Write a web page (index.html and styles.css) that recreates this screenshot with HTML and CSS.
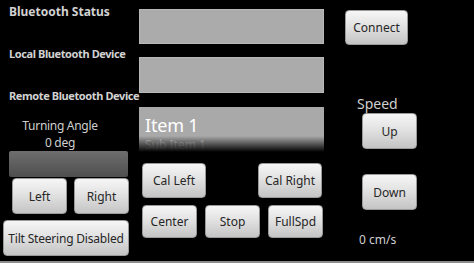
FILE: index.html
```html
<!DOCTYPE html>
<html>
<head>
<meta charset="utf-8">
<link rel="stylesheet" href="styles.css">
</head>
<body>
<div class="screen">
  <div class="main">
    <div class="col col-left">
      <div class="label label-title">Bluetooth Status</div>
      <div class="label label-local">Local Bluetooth Device</div>
      <div class="label label-remote">Remote Bluetooth Device</div>
      <div class="angle">
        <div>Turning Angle</div>
        <div>0 deg</div>
      </div>
      <div class="bar"></div>
      <div class="row row-lr">
        <button class="btn btn-lr">Left</button>
        <button class="btn btn-lr">Right</button>
      </div>
      <button class="btn btn-tilt">Tilt Steering Disabled</button>
    </div>
    <div class="col col-mid">
      <div class="field field-1"></div>
      <div class="field field-2"></div>
      <div class="list">
        <div class="item-title">Item 1</div>
        <div class="item-sub">Sub Item 1</div>
      </div>
      <div class="row row-cal">
        <button class="btn btn-cal">Cal Left</button>
        <button class="btn btn-cal">Cal Right</button>
      </div>
      <div class="row row-ctl">
        <button class="btn btn-ctl">Center</button>
        <button class="btn btn-ctl">Stop</button>
        <button class="btn btn-ctl">FullSpd</button>
      </div>
    </div>
    <div class="col col-right">
      <button class="btn btn-connect">Connect</button>
      <div class="speed-label">Speed</div>
      <button class="btn btn-speed btn-up">Up</button>
      <button class="btn btn-speed btn-down">Down</button>
      <div class="speed-value">0 cm/s</div>
    </div>
  </div>
  <div class="bottom-line"></div>
</div>
</body>
</html>
```
FILE: styles.css
```css
html, body {
  margin: 0;
  padding: 0;
  background: #000;
}
body {
  width: 474px;
  height: 263px;
  overflow: hidden;
  font-family: "Noto Sans", "Open Sans", "DejaVu Sans", sans-serif;
}
.screen {
  display: flex;
  flex-direction: column;
  height: 263px;
}
.main {
  flex: 1;
  display: grid;
  grid-template-columns: 139px 185px 1fr;
}
.bottom-line {
  height: 2px;
  background: #8c8c8c;
}
.col {
  display: flex;
  flex-direction: column;
  align-items: flex-start;
}
.label {
  color: #d2d2d2;
  font-weight: bold;
  white-space: nowrap;
  margin-left: 9px;
}
.label-title {
  font-size: 12px;
  line-height: 16px;
  margin-top: 4px;
}
.label-local {
  font-size: 11px;
  line-height: 14px;
  margin-top: 27px;
  letter-spacing: -0.4px;
}
.label-remote {
  font-size: 11px;
  line-height: 14px;
  margin-top: 28px;
  letter-spacing: -0.4px;
}
.angle {
  width: 120px;
  text-align: center;
  color: #cfcfcf;
  font-size: 12px;
  line-height: 17px;
  letter-spacing: -0.3px;
  margin-top: 14px;
}
.bar {
  margin-top: 0;
  margin-left: 9px;
  width: 119px;
  height: 26px;
  box-sizing: border-box;
  border-radius: 2px;
  background: linear-gradient(#6e6e6e, #4e4e4e);
}
.row {
  display: flex;
}
.btn {
  box-sizing: border-box;
  margin: 0;
  padding: 0;
  border: 1px solid #9a9a9a;
  border-radius: 4px;
  background: linear-gradient(#f6f6f6 0%, #e2e2e2 45%, #c4c4c4 100%);
  color: #262626;
  font-family: inherit;
  font-size: 12px;
  white-space: nowrap;
}
.row-lr {
  margin-top: 1px;
  margin-left: 12px;
  gap: 7px;
}
.btn-lr {
  width: 55px;
  height: 36px;
}
.btn-tilt {
  margin-top: 6px;
  margin-left: 3px;
  width: 126px;
  height: 36px;
  letter-spacing: -0.2px;
}
.field {
  width: 185px;
  box-sizing: border-box;
  background: #ababab;
  border: 1px solid #b8b8b8;
}
.field-1 {
  margin-top: 9px;
  height: 35px;
}
.field-2 {
  margin-top: 13px;
  height: 36px;
}
.list {
  position: relative;
  margin-top: 14px;
  width: 185px;
  height: 45px;
  overflow: hidden;
  background: #a9a9a9;
  box-sizing: border-box;
  padding-left: 6px;
}
.list::after {
  content: "";
  position: absolute;
  left: 0;
  right: 0;
  bottom: 0;
  height: 16px;
  background: linear-gradient(rgba(0,0,0,0), #000);
}
.item-title {
  color: #fff;
  font-size: 18px;
  line-height: 24px;
  letter-spacing: -0.2px;
  margin-top: 6px;
}
.item-sub {
  color: #d8d8d8;
  font-size: 12px;
  line-height: 16px;
}
.row-cal {
  margin-top: 11px;
  margin-left: 3px;
  gap: 52px;
}
.btn-cal {
  width: 64px;
  height: 35px;
}
.row-ctl {
  margin-top: 7px;
  margin-left: 3px;
  gap: 8px;
}
.btn-ctl {
  width: 55px;
  height: 33px;
}
.col-right {
  padding-left: 21px;
}
.btn-connect {
  margin-top: 10px;
  width: 63px;
  height: 35px;
}
.speed-label {
  color: #cfcfcf;
  font-size: 14px;
  line-height: 16px;
  margin-top: 51px;
  margin-left: 12px;
}
.btn-speed {
  width: 55px;
  height: 36px;
  margin-left: 17px;
}
.btn-up {
  margin-top: 1px;
}
.btn-down {
  margin-top: 25px;
}
.speed-value {
  color: #d0d0d0;
  font-size: 12px;
  line-height: 16px;
  margin-top: 22px;
  margin-left: 14px;
}
```
